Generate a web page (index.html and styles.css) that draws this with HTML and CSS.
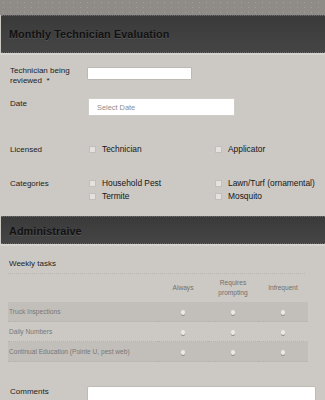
FILE: index.html
```html
<!DOCTYPE html>
<html lang="en">
<head>
  <meta charset="UTF-8">
  <meta name="viewport" content="width=device-width, initial-scale=1.0">
  <title>Monthly Technician Evaluation</title>
  <link rel="stylesheet" href="styles.css">
</head>
<body>

<div class="top"></div>

<div class="bar"><h1>Monthly Technician Evaluation</h1></div>

<form class="section first" onsubmit="return false;">
  <div class="row r1">
    <label class="lbl">Technician being reviewed&nbsp;&nbsp;*</label>
    <input class="txt name" type="text">
  </div>

  <div class="row r2">
    <label class="lbl">Date</label>
    <input class="txt date" type="text" placeholder="Select Date">
  </div>

  <div class="row r3">
    <label class="lbl">Licensed</label>
    <div class="opts">
      <span class="opt"><i class="cb"></i>Technician</span>
      <span class="opt"><i class="cb"></i>Applicator</span>
    </div>
  </div>

  <div class="row r4">
    <label class="lbl">Categories</label>
    <div class="opts">
      <span class="opt"><i class="cb"></i>Household Pest</span>
      <span class="opt"><i class="cb"></i>Lawn/Turf (ornamental)</span>
      <span class="opt"><i class="cb"></i>Termite</span>
      <span class="opt"><i class="cb"></i>Mosquito</span>
    </div>
  </div>
</form>

<div class="bar small"><h2>Administraive</h2></div>

<form class="section second" onsubmit="return false;">
  <div class="sub">Weekly tasks</div>

  <table class="matrix">
    <thead>
      <tr>
        <th></th>
        <th>Always</th>
        <th>Requires<br>prompting</th>
        <th>Infrequent</th>
      </tr>
    </thead>
    <tbody>
      <tr class="band">
        <td>Truck Inspections</td>
        <td><i class="rd"></i></td><td><i class="rd"></i></td><td><i class="rd"></i></td>
      </tr>
      <tr>
        <td>Daily Numbers</td>
        <td><i class="rd"></i></td><td><i class="rd"></i></td><td><i class="rd"></i></td>
      </tr>
      <tr class="band">
        <td>Continual Education (Pointe U, pest web)</td>
        <td><i class="rd"></i></td><td><i class="rd"></i></td><td><i class="rd"></i></td>
      </tr>
    </tbody>
  </table>

  <div class="row r5">
    <label class="lbl">Comments</label>
    <textarea class="area"></textarea>
  </div>
</form>

</body>
</html>
```

FILE: styles.css
```css
html, body { margin: 0; padding: 0; }
body { font-family: "Liberation Sans", Arial, sans-serif; background: #ccc9c4; color: #222; height: 400px; overflow: hidden; }

.top { height: 15px; background-color: #8f8b86; background-image: radial-gradient(#a29e98 0.5px, transparent 0.7px); background-size: 7px 5px; }

.bar { margin-left: 1px; height: 36px; display: flex; align-items: center; padding-left: 8px; background: linear-gradient(#3a3a3a, #454545); border-top: 1px dotted #6a6a6a; border-bottom: 1px dotted #6a6a6a; }
.bar h1, .bar h2 { margin: 0; font-size: 10.8px; font-weight: bold; color: #111; text-shadow: 0 1px 0 #555; letter-spacing: 0.1px; }
.bar.small { height: 26px; }
.bar.small h2 { margin-top: 2px; }

.section { display: block; padding: 0 0 0 10px; margin: 0; border-top: 2px solid #d7d4cf; }
.first { padding-top: 11px; padding-bottom: 13px; }
.second { padding-top: 11px; padding-left: 8px; }

.row { display: flex; align-items: flex-start; }
.lbl { flex: 0 0 77px; font-size: 8px; line-height: 10px; color: #222; }

.txt { box-sizing: border-box; margin: 0; border: 1px solid #bdbab5; background: #fff; border-radius: 1px; font-family: inherit; }
.name { width: 105px; height: 13px; margin-top: 1px; }
.date { width: 147px; height: 18px; margin-left: 1px; padding: 0 8px; font-size: 7.4px; border-color: #d0cdc8; }
.date::placeholder { color: #8c8c8c; }

.r2 { margin-top: 12px; }
.r2 .lbl { margin-top: 1px; }
.r3 { margin-top: 27px; }
.r4 { margin-top: 21px; }
.r3 .lbl, .r4 .lbl { line-height: 13px; }

.opts { display: grid; grid-template-columns: 126px auto; }
.opt { display: flex; align-items: center; font-size: 8.4px; line-height: 13px; color: #151515; }
.cb { display: inline-block; width: 5px; height: 5px; margin: 0 6px 0 2px; background: #e4e2de; border: 0.5px solid #c2bfba; }

.sub { width: 296px; font-size: 8px; line-height: 10px; color: #222; padding: 2px 0 4px 1px; border-bottom: 1px dotted #b9b6b1; }

.matrix { border-collapse: collapse; width: 300px; table-layout: fixed; }
.matrix th { height: 28px; padding: 0; font-size: 6.6px; line-height: 10px; font-weight: normal; color: #707070; width: 50px; vertical-align: middle; text-align: center; }
.matrix th:first-child { width: 150px; }
.matrix td { height: 19px; padding: 0; font-size: 6.6px; color: #777; text-align: center; border-bottom: 1px dotted #b5b2ad; }
.matrix td:first-child { text-align: left; padding-left: 1px; }
.band td { background-color: #c2bfba; background-image: radial-gradient(#cbc8c3 0.5px, transparent 0.7px); background-size: 4px 4px; }
.rd { display: inline-block; width: 4px; height: 5px; border-radius: 2px; background: #ebe9e5; box-shadow: 0 1px 0 #8f8c88; vertical-align: middle; }

.r5 { margin-top: 24px; padding-left: 2px; }
.r5 .lbl { flex-basis: 77px; margin-top: 1px; }
.area { box-sizing: border-box; width: 229px; height: 40px; margin: 0; border: 1px solid #bfbcb7; border-radius: 2px; background: #fff; resize: none; }
```
